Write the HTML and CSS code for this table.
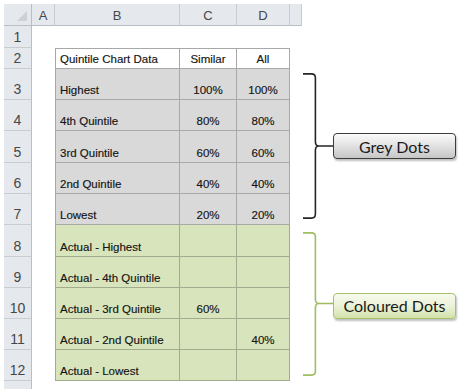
FILE: index.html
```html
<!DOCTYPE html>
<html lang="en">
<head>
<meta charset="utf-8">
<title>Quintile Chart Data</title>
<link rel="stylesheet" href="styles.css">
</head>
<body>
<div class="page">
  <div class="sheet">
    <!-- column headers -->
    <div class="hdr corner"><span class="corner-mark"></span></div>
    <div class="hdr col">A</div>
    <div class="hdr col">B</div>
    <div class="hdr col">C</div>
    <div class="hdr col">D</div>
    <div class="hdr col"></div>

    <!-- row 1 -->
    <div class="hdr row">1</div>
    <div class="cell"></div><div class="cell"></div><div class="cell"></div><div class="cell"></div><div class="cell"></div>

    <!-- row 2 -->
    <div class="hdr row">2</div>
    <div class="cell"></div>
    <div class="tc head top first">Quintile Chart Data</div>
    <div class="tc head top num">Similar</div>
    <div class="tc head top num">All</div>
    <div class="cell"></div>

    <!-- rows 3-7 -->
    <div class="hdr row">3</div>
    <div class="cell"></div>
    <div class="tc grey first">Highest</div>
    <div class="tc grey num">100%</div>
    <div class="tc grey num">100%</div>
    <div class="cell"></div>

    <div class="hdr row">4</div>
    <div class="cell"></div>
    <div class="tc grey first">4th Quintile</div>
    <div class="tc grey num">80%</div>
    <div class="tc grey num">80%</div>
    <div class="cell"></div>

    <div class="hdr row">5</div>
    <div class="cell"></div>
    <div class="tc grey first">3rd Quintile</div>
    <div class="tc grey num">60%</div>
    <div class="tc grey num">60%</div>
    <div class="cell"></div>

    <div class="hdr row">6</div>
    <div class="cell"></div>
    <div class="tc grey first">2nd Quintile</div>
    <div class="tc grey num">40%</div>
    <div class="tc grey num">40%</div>
    <div class="cell"></div>

    <div class="hdr row">7</div>
    <div class="cell"></div>
    <div class="tc grey first">Lowest</div>
    <div class="tc grey num">20%</div>
    <div class="tc grey num">20%</div>
    <div class="cell"></div>

    <!-- rows 8-12 -->
    <div class="hdr row">8</div>
    <div class="cell"></div>
    <div class="tc green first">Actual - Highest</div>
    <div class="tc green num"></div>
    <div class="tc green num"></div>
    <div class="cell"></div>

    <div class="hdr row">9</div>
    <div class="cell"></div>
    <div class="tc green first">Actual - 4th Quintile</div>
    <div class="tc green num"></div>
    <div class="tc green num"></div>
    <div class="cell"></div>

    <div class="hdr row">10</div>
    <div class="cell"></div>
    <div class="tc green first">Actual - 3rd Quintile</div>
    <div class="tc green num">60%</div>
    <div class="tc green num"></div>
    <div class="cell"></div>

    <div class="hdr row">11</div>
    <div class="cell"></div>
    <div class="tc green first">Actual - 2nd Quintile</div>
    <div class="tc green num"></div>
    <div class="tc green num">40%</div>
    <div class="cell"></div>

    <div class="hdr row">12</div>
    <div class="cell"></div>
    <div class="tc green first">Actual - Lowest</div>
    <div class="tc green num"></div>
    <div class="tc green num"></div>
    <div class="cell"></div>

    <!-- next row header, only its top edge shows -->
    <div class="hdr row"></div>
    <div class="cell"></div><div class="cell"></div><div class="cell"></div><div class="cell"></div><div class="cell"></div>
  </div>

  <div class="notes">
    <div class="note note-grey">
      <svg class="brace" width="30" height="146" viewBox="0 0 30 146">
        <path d="M0,0.9 H8.5 Q12.4,0.9 12.4,5 V68.5 Q12.4,72.8 15.5,73 Q12.4,73.2 12.4,77.5 V141 Q12.4,145.1 8.5,145.1 H0" />
        <path d="M15.5,73 H30" />
      </svg>
      <div class="callout callout-grey">Grey Dots</div>
    </div>
    <div class="note note-green">
      <svg class="brace" width="30" height="144" viewBox="0 0 30 144">
        <path d="M0,0.9 H8.5 Q12.4,0.9 12.4,5 V67 Q12.4,71.3 15.5,71.5 Q12.4,71.7 12.4,76 V139 Q12.4,143.1 8.5,143.1 H0" />
        <path d="M15.5,71.5 H30" />
      </svg>
      <div class="callout callout-green">Coloured Dots</div>
    </div>
  </div>
</div>
</body>
</html>
```

FILE: styles.css
```css
html, body {
  margin: 0;
  padding: 0;
  background: #ffffff;
}

body {
  width: 474px;
  height: 389px;
  overflow: hidden;
}

.page {
  display: flex;
  align-items: flex-start;
  padding: 4px 0 0 4px;
}

/* ---------- worksheet ---------- */
.sheet {
  display: grid;
  grid-template-columns: 28px 23px 125px 57px 53px 12px;
  grid-template-rows: 22px 22px 21px 31px 31px 32px 31px 31px 32px 31px 31px 31px 31px 20px;
  font-family: "Liberation Sans", Arial, sans-serif;
  color: #141414;
}

.sheet > div {
  box-sizing: border-box;
  min-width: 0;
}

.hdr {
  background: #e5e8ec;
  color: #474747;
  display: flex;
  justify-content: center;
}

.hdr.col {
  align-items: center;
  font-size: 13px;
  padding-top: 2px;
  border-right: 1px solid #c9cdd2;
  border-bottom: 1px solid #b9bec5;
}

.hdr.row {
  align-items: flex-end;
  font-size: 14px;
  line-height: 16px;
  padding-bottom: 2px;
  border-right: 1px solid #b9bec5;
  border-bottom: 1px solid #c9cdd2;
}

.hdr.corner {
  position: relative;
  border-right: 1px solid #b9bec5;
  border-bottom: 1px solid #b9bec5;
}

/* the little select-all triangle */
.corner-mark {
  position: absolute;
  right: 4px;
  bottom: 4px;
  width: 0;
  height: 0;
  border-left: 10px solid transparent;
  border-bottom: 10px solid #cdd1d6;
}

.cell {
  background: #ffffff;
}

/* ---------- data table ---------- */
.tc {
  display: flex;
  align-items: flex-end;
  font-size: 11.5px;
  line-height: 13px;
  padding: 0 4px 2px 4px;
  white-space: nowrap;
  border-right: 1px solid #a8a8a8;
  border-bottom: 1px solid #a8a8a8;
  -webkit-text-stroke: 0.15px #141414;
}

.tc.top {
  border-top: 1px solid #a8a8a8;
}

.tc.first {
  border-left: 1px solid #a8a8a8;
}

.tc.num {
  justify-content: center;
}

.tc.head {
  background: #ffffff;
}

.tc.grey {
  background: #d9d9d9;
}

.tc.green {
  background: #d8e4bc;
  border-color: #a3ab8e;
}

.tc.green.first {
  border-left-color: #a3ab8e;
}

/* ---------- annotations ---------- */
.notes {
  display: flex;
  flex-direction: column;
  margin-left: 1px;
  padding-top: 69px;
}

.note {
  display: flex;
  align-items: center;
}

.note-green {
  margin-top: 13px;
}

.brace {
  display: block;
  flex: none;
  fill: none;
  stroke-width: 1.6;
  stroke-linecap: round;
}

.note-grey .brace {
  stroke: #262626;
}

.note-green .brace {
  stroke: #9fbd62;
}

.callout {
  box-sizing: border-box;
  width: 123px;
  height: 26px;
  border-radius: 4px;
  display: flex;
  align-items: center;
  justify-content: center;
  font-family: Lato, "Open Sans", sans-serif;
  font-size: 16px;
  color: #1a1a1a;
  box-shadow: 1px 2px 2px rgba(0, 0, 0, 0.25);
}

.callout-grey {
  border: 1px solid #3c3c3c;
  background: linear-gradient(#fbfbfb, #e4e4e4 45%, #c6c6c6);
}

.callout-green {
  margin-top: 3px;
  border: 1px solid #a6c36a;
  background: linear-gradient(#f7faee, #ebf2d8 50%, #d3e3ab);
}
```
